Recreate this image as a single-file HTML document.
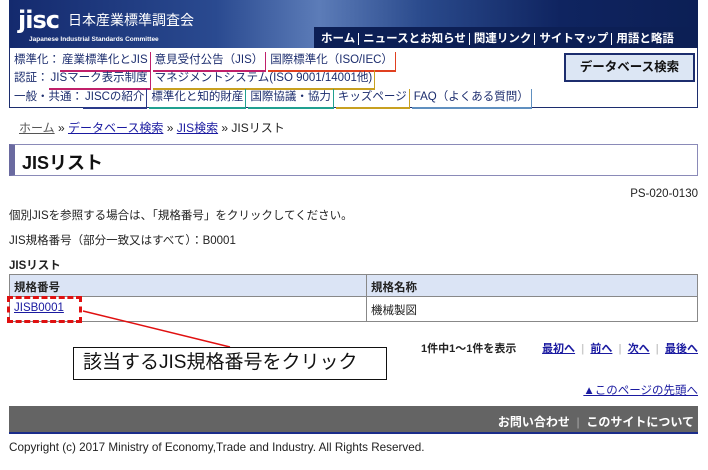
<!DOCTYPE html>
<html><head><meta charset="utf-8"><style>
*{margin:0;padding:0;box-sizing:border-box}
body{width:708px;height:470px;background:#fff;font-family:"Liberation Sans","Noto Sans CJK JP",sans-serif;font-size:12px;color:#222;position:relative;overflow:hidden}
.a{position:absolute;white-space:nowrap}
a{color:#1a1aa0;text-decoration:underline}
.nav span{color:#fff;font-weight:bold;font-size:11.5px;padding:0 3px 0 4px;border-left:1px solid #fff}
.m span{display:inline-block;padding:0 2px 1px 2px;margin-right:2px}
</style></head><body>
<div class="a" style="left:9px;top:0;width:689px;height:48px;background:linear-gradient(90deg,#142a6e 0%,#2a4a90 30%,#5c7cb8 45%,#2a4a8c 60%,#0f2460 80%,#0c1f55 100%)"></div>
<div class="a" style="left:18px;top:6px;color:#fff;font-weight:bold;font-size:24px;letter-spacing:-1px;font-family:'DejaVu Sans',sans-serif">jisc</div>
<div class="a" style="left:68px;top:10px;color:#fff;font-size:14px">日本産業標準調査会</div>
<div class="a" style="left:29px;top:36px;color:#fff;font-size:6.5px;font-weight:bold">Japanese Industrial Standards Committee</div>
<div class="a" style="left:314px;top:27px;width:384px;height:21px;background:#0c1f55"></div>
<div class="a nav" style="left:317px;top:30px"><span style="border:none">ホーム</span><span>ニュースとお知らせ</span><span>関連リンク</span><span>サイトマップ</span><span>用語と略語</span></div>
<div class="a" style="left:9px;top:48px;width:689px;height:60px;border:1px solid #1c2d6e;border-top:none"></div>
<div class="a m" style="left:14px;top:52px;font-size:11.5px;line-height:17px;color:#1c2d6e">標準化：<span style="border-bottom:2px solid #c0206a;border-right:1px solid #c0206a">産業標準化とJIS</span><span style="border-bottom:2px solid #c0206a;border-right:1px solid #c0206a">意見受付公告（JIS）</span><span style="border-bottom:2px solid #e04020;border-right:1px solid #e04020">国際標準化（ISO/IEC）</span></div>
<div class="a m" style="left:14px;top:70px;font-size:11.5px;line-height:17px;color:#1c2d6e">認証：<span style="border-bottom:2px solid #c0206a;border-right:1px solid #c0206a">JISマーク表示制度</span><span style="border-bottom:2px solid #c8a020;border-right:1px solid #c8a020">マネジメントシステム(ISO 9001/14001他)</span></div>
<div class="a m" style="left:14px;top:89px;font-size:11.5px;line-height:17px;color:#1c2d6e">一般・共通：<span style="border-bottom:2px solid #2a3a8a;border-right:1px solid #2a3a8a">JISCの紹介</span><span style="border-bottom:2px solid #20a090;border-right:1px solid #20a090">標準化と知的財産</span><span style="border-bottom:2px solid #20a090;border-right:1px solid #20a090">国際協議・協力</span><span style="border-bottom:2px solid #c8a020;border-right:1px solid #c8a020">キッズページ</span><span style="border-bottom:2px solid #6090c0;border-right:1px solid #6090c0">FAQ（よくある質問）</span></div>
<div class="a" style="left:564px;top:53px;width:131px;height:29px;background:#dce6f4;border:2px solid #1c2d6e;text-align:center;line-height:25px;font-weight:bold;font-size:12.5px;color:#111">データベース検索</div>
<div class="a" style="left:19px;top:119px;font-size:12px"><a style="color:#555">ホーム</a> » <a>データベース検索</a> » <a>JIS検索</a> » JISリスト</div>
<div class="a" style="left:9px;top:144px;width:689px;height:32px;border:1px solid #8a8ab8;border-left:6px solid #6a6aa0"></div>
<div class="a" style="left:22px;top:149px;font-size:18px;font-weight:bold;color:#111">JISリスト</div>
<div class="a" style="right:10px;top:188px;font-size:11.5px">PS-020-0130</div>
<div class="a" style="left:9px;top:207px;font-size:11.5px">個別JISを参照する場合は、「規格番号」をクリックしてください。</div>
<div class="a" style="left:9px;top:232px;font-size:11.5px">JIS規格番号（部分一致又はすべて）：B0001</div>
<div class="a" style="left:9px;top:257px;font-size:11.5px;font-weight:bold">JISリスト</div>
<div class="a" style="left:9px;top:274px;width:689px;height:48px;border:1px solid #888"></div>
<div class="a" style="left:10px;top:275px;width:687px;height:22px;background:#dbe4f5;border-bottom:1px solid #888"></div>
<div class="a" style="left:366px;top:275px;width:1px;height:46px;background:#888"></div>
<div class="a" style="left:14px;top:279px;font-weight:bold;font-size:11.5px">規格番号</div>
<div class="a" style="left:371px;top:279px;font-weight:bold;font-size:11.5px">規格名称</div>
<div class="a" style="left:14px;top:302px;font-size:11.5px"><a>JISB0001</a></div>
<div class="a" style="left:371px;top:302px;font-size:11.5px">機械製図</div>
<div class="a" style="left:7px;top:296px;width:75px;height:27px;border:3px dashed #e01010"></div>
<svg class="a" style="left:0;top:0" width="708" height="470"><line x1="83" y1="311" x2="230" y2="347" stroke="#e01010" stroke-width="1.5"/></svg>
<div class="a" style="left:73px;top:347px;width:314px;height:33px;border:1px solid #111;background:#fff;font-size:19px;line-height:30px;padding-left:9px;color:#111">該当するJIS規格番号をクリック</div>
<div class="a" style="left:421px;top:340px;font-size:11px;font-weight:bold">1件中1～1件を表示</div>
<div class="a" style="right:10px;top:340px;font-size:11px;font-weight:bold;color:#ccc"><a>最初へ</a> &nbsp;|&nbsp; <a>前へ</a> &nbsp;|&nbsp; <a>次へ</a> &nbsp;|&nbsp; <a>最後へ</a></div>
<div class="a" style="right:10px;top:382px;font-size:11.5px"><a>▲このページの先頭へ</a></div>
<div class="a" style="left:9px;top:406px;width:689px;height:28px;background:#646464;border-bottom:2px solid #1c2d8a"></div>
<div class="a" style="right:14px;top:413px;color:#fff;font-weight:bold;font-size:12px">お問い合わせ <span style="color:#aaa;font-weight:normal">&nbsp;|&nbsp;</span> このサイトについて</div>
<div class="a" style="left:9px;top:441px;font-size:11.7px;color:#222">Copyright (c) 2017 Ministry of Economy,Trade and Industry. All Rights Reserved.</div>
</body></html>
